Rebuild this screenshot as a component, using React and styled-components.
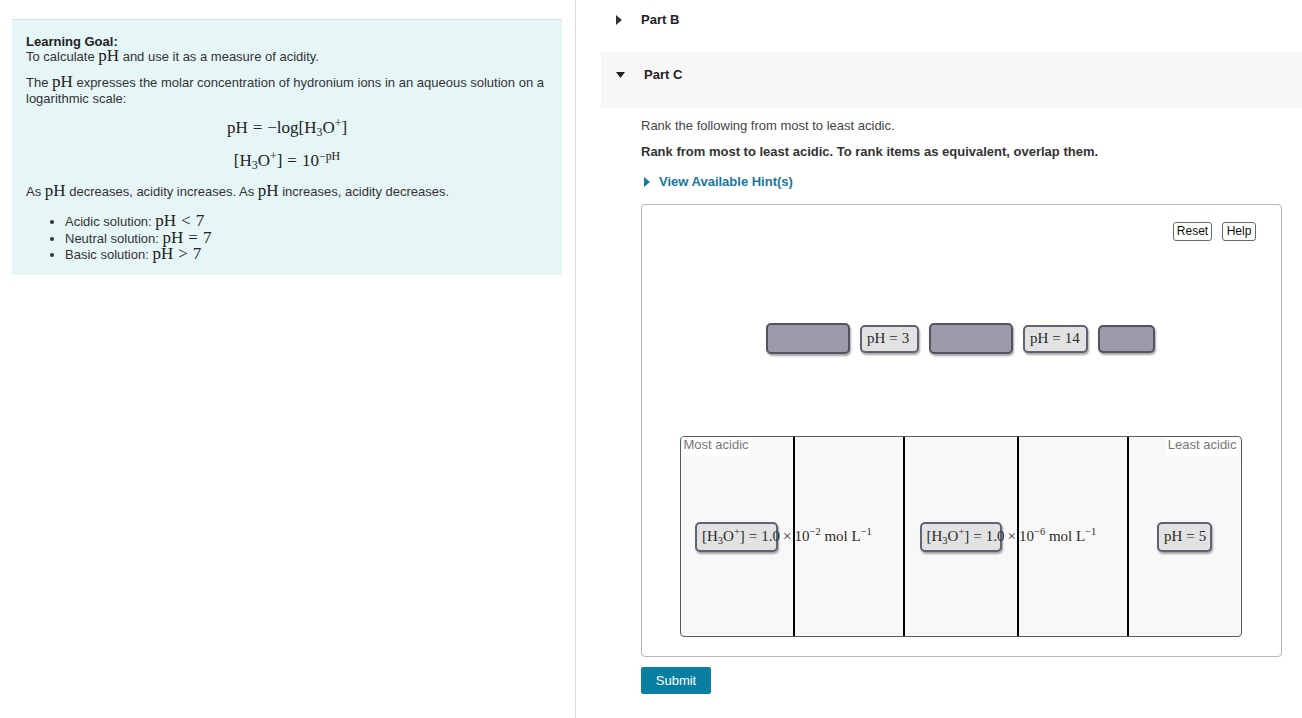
import React from "react";
import styled, { createGlobalStyle } from "styled-components";

const GlobalStyle = createGlobalStyle`
  html, body {
    margin: 0;
    padding: 0;
    background: #fff;
  }
  body {
    font-family: "Liberation Sans", Arial, sans-serif;
    font-size: 13px;
    color: #333;
  }
`;

const Page = styled.div`
  display: flex;
  min-height: 100vh;
`;

const LeftColumn = styled.div`
  width: 575px;
  flex-shrink: 0;
  border-right: 1px solid #d5dde4;
`;

const GoalPanel = styled.div`
  margin: 19px 0 0 12px;
  width: 550px;
  box-sizing: border-box;
  padding: 14px 14px 11px;
  background: #e6f5f6;
  border-top: 1px solid #dcdcdc;
  line-height: 15px;
`;

const GoalTitle = styled.div`
  font-weight: bold;
  color: #222;
`;

const Para = styled.p`
  margin: ${(p) => p.$mt || 0}px 0 0;
  line-height: 16px;
`;

const Formula = styled.div`
  margin-top: ${(p) => p.$mt}px;
  text-align: center;
  line-height: 22px;
  font-family: "Liberation Serif", "Times New Roman", serif;
  font-size: 17px;
  color: #222;
`;

const M = styled.span`
  font-family: "Liberation Serif", "Times New Roman", serif;
  font-size: 17px;
  line-height: 0;
  color: #222;
`;

const Op = styled.span`
  margin: 0 ${(p) => p.$gap || 5}px;
`;

const Sub = styled.sub`
  font-size: 0.7em;
  vertical-align: -3px;
  line-height: 0;
`;

const Sup = styled.sup`
  font-size: 0.7em;
  vertical-align: 6px;
  line-height: 0;
`;

const BulletList = styled.ul`
  margin: 14px 0 0;
  padding-left: 39px;
  line-height: 16.5px;
`;

const RightColumn = styled.div`
  flex: 1;
  display: flex;
  flex-direction: column;
`;

const PartRow = styled.div`
  display: flex;
  box-sizing: border-box;
  height: ${(p) => (p.$open ? 56 : 38)}px;
  margin-left: 25px;
  padding-left: 15px;
  padding-top: ${(p) => (p.$open ? 15 : 2)}px;
  align-items: ${(p) => (p.$open ? "flex-start" : "center")};
  background: ${(p) => (p.$open ? "#f7f7f7" : "transparent")};
  margin-bottom: ${(p) => (p.$open ? 0 : 14)}px;
  svg {
    margin-top: ${(p) => (p.$open ? 5 : 0)}px;
  }
`;

const PartTitle = styled.span`
  font-weight: bold;
  font-size: 13px;
  line-height: 16px;
  color: #222;
  margin-left: 19px;
`;

const Content = styled.div`
  margin-left: 65px;
  width: 641px;
`;

const Instruction = styled.div`
  margin-top: ${(p) => p.$mt}px;
  line-height: 16px;
  font-weight: ${(p) => (p.$bold ? "bold" : "normal")};
  color: ${(p) => (p.$bold ? "#333" : "#444")};
`;

const HintLink = styled.div`
  margin-top: 14px;
  display: flex;
  align-items: center;
  gap: 9px;
  padding-left: 3px;
  line-height: 16px;
  font-weight: bold;
  color: #1677a0;
`;

const RankBox = styled.div`
  margin-top: 14px;
  height: 453px;
  box-sizing: border-box;
  border: 1px solid #b8b8b8;
  border-radius: 4px;
  padding: 17px 25px 19px 37px;
  display: flex;
  flex-direction: column;
`;

const Toolbar = styled.div`
  display: flex;
  justify-content: flex-end;
  gap: 10px;
`;

const ToolButton = styled.button`
  width: ${(p) => p.$w}px;
  height: 19px;
  padding: 0;
  background: #fff;
  border: 1px solid #5d6e78;
  border-radius: 3px;
  font-family: "Liberation Sans", Arial, sans-serif;
  font-size: 12px;
  color: #111;
  line-height: 17px;
`;

const Tray = styled.div`
  margin-top: 82px;
  display: flex;
  justify-content: center;
  align-items: center;
  gap: 10px;
  padding-right: 14px;
`;

const Chip = styled.div`
  box-sizing: border-box;
  width: ${(p) => p.$w}px;
  height: ${(p) => p.$h || 30}px;
  display: flex;
  align-items: center;
  padding-left: 5px;
  white-space: nowrap;
  border: 2px solid ${(p) => (p.$empty ? "#54545f" : "#5f6370")};
  border-radius: 5px;
  background: ${(p) => (p.$empty ? "#9b9aab" : "#e2e2e2")};
  box-shadow: 1px 2px 2px rgba(0, 0, 0, 0.35);
  font-family: "Liberation Serif", "Times New Roman", serif;
  font-size: 15px;
  color: #2a2a2a;
  flex-shrink: 0;
`;

const Bins = styled.div`
  margin-top: 82px;
  margin-right: 14px;
  align-self: center;
  width: 562px;
  height: 202px;
  box-sizing: border-box;
  border: 1px solid #555a66;
  border-radius: 4px;
  background: #f8f8f8;
  display: grid;
  grid-template-columns: 112px 110px 114px 110px 1fr;
  position: relative;
`;

const Bin = styled.div`
  display: flex;
  align-items: center;
  justify-content: center;
  border-left: ${(p) => (p.$first ? "none" : "2px solid #000")};
`;

const BinLabel = styled.span`
  position: absolute;
  top: 0;
  ${(p) => (p.$right ? "right: 2px;" : "left: 1px;")}
  padding: 0 2px 4px;
  background: #fff;
  color: #777;
  font-size: 13px;
  line-height: 15px;
`;

const SubmitButton = styled.button`
  margin-top: 10px;
  width: 70px;
  height: 27px;
  border: none;
  border-radius: 2px;
  background: #087ea0;
  color: #fff;
  font-family: "Liberation Sans", Arial, sans-serif;
  font-size: 13px;
`;

const Caret = ({ down }) =>
  down ? (
    <svg width="9" height="6" viewBox="0 0 9 6">
      <path d="M0 0 H9 L4.5 6 Z" fill="#222" />
    </svg>
  ) : (
    <svg width="6" height="10" viewBox="0 0 6 10">
      <path d="M0 0 L6 5 L0 10 Z" fill={"currentColor"} />
    </svg>
  );

const PH = () => <M>pH</M>;

const Concentration = ({ exp }) => (
  <span>
    [H<Sub>3</Sub>O<Sup>+</Sup>]<Op $gap={4}>=</Op>1.0<Op $gap={3}>×</Op>10<Sup>−{exp}</Sup> mol L<Sup>−1</Sup>
  </span>
);

export default function App() {
  return (
    <Page>
      <GlobalStyle />
      <LeftColumn>
        <GoalPanel>
          <GoalTitle>Learning Goal:</GoalTitle>
          <div>
            To calculate <PH /> and use it as a measure of acidity.
          </div>
          <Para $mt={11}>
            The <PH /> expresses the molar concentration of hydronium ions in an aqueous solution on a
            logarithmic scale:
          </Para>
          <Formula $mt={10}>
            pH<Op>=</Op>−log[H<Sub>3</Sub>O<Sup>+</Sup>]
          </Formula>
          <Formula $mt={11}>
            [H<Sub>3</Sub>O<Sup>+</Sup>]<Op>=</Op>10<Sup>−pH</Sup>
          </Formula>
          <Para $mt={12}>
            As <PH /> decreases, acidity increases. As <PH /> increases, acidity decreases.
          </Para>
          <BulletList>
            <li>
              Acidic solution: <M>pH<Op>&lt;</Op>7</M>
            </li>
            <li>
              Neutral solution: <M>pH<Op>=</Op>7</M>
            </li>
            <li>
              Basic solution: <M>pH<Op>&gt;</Op>7</M>
            </li>
          </BulletList>
        </GoalPanel>
      </LeftColumn>

      <RightColumn>
        <PartRow>
          <Caret />
          <PartTitle>Part B</PartTitle>
        </PartRow>
        <PartRow $open>
          <Caret down />
          <PartTitle>Part C</PartTitle>
        </PartRow>

        <Content>
          <Instruction $mt={10}>Rank the following from most to least acidic.</Instruction>
          <Instruction $mt={10} $bold>
            Rank from most to least acidic. To rank items as equivalent, overlap them.
          </Instruction>
          <HintLink>
            <Caret />
            View Available Hint(s)
          </HintLink>

          <RankBox>
            <Toolbar>
              <ToolButton $w={39}>Reset</ToolButton>
              <ToolButton $w={34}>Help</ToolButton>
            </Toolbar>

            <Tray>
              <Chip $empty $w={84} $h={31} />
              <Chip $w={59} $h={28}>
                pH<Op $gap={4}>=</Op>3
              </Chip>
              <Chip $empty $w={84} $h={31} />
              <Chip $w={65} $h={28}>
                pH<Op $gap={4}>=</Op>14
              </Chip>
              <Chip $empty $w={57} $h={28} />
            </Tray>

            <Bins>
              <BinLabel>Most acidic</BinLabel>
              <BinLabel $right>Least acidic</BinLabel>
              <Bin $first>
                <Chip $w={83}>
                  <Concentration exp={2} />
                </Chip>
              </Bin>
              <Bin />
              <Bin>
                <Chip $w={82}>
                  <Concentration exp={6} />
                </Chip>
              </Bin>
              <Bin />
              <Bin>
                <Chip $w={55}>
                  pH<Op $gap={4}>=</Op>5
                </Chip>
              </Bin>
            </Bins>
          </RankBox>

          <SubmitButton>Submit</SubmitButton>
        </Content>
      </RightColumn>
    </Page>
  );
}
